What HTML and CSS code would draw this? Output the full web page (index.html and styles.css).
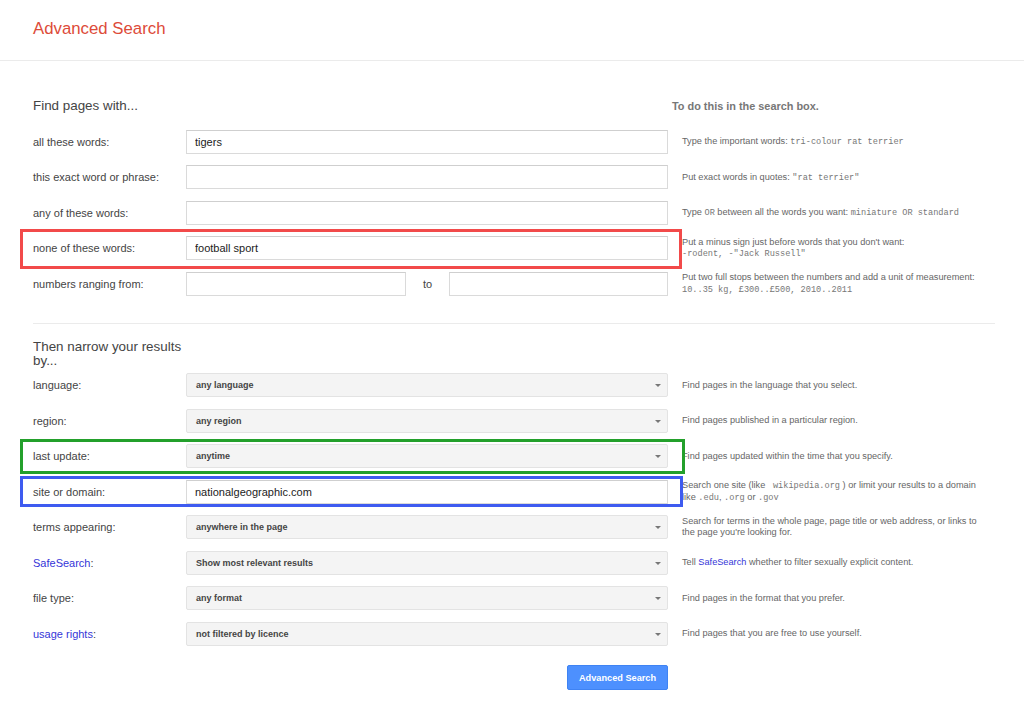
FILE: index.html
```html
<!DOCTYPE html>
<html lang="en">
<head>
  <meta charset="UTF-8" />
  <title>Advanced Search</title>
  <link rel="stylesheet" href="styles.css">
</head>
<body>
  <div class="page">
    <div class="header">
      <h1>Advanced Search</h1>
    </div>

    <div class="section first">
      <div class="row head-row">
        <h2>Find pages with...</h2>
        <div></div>
        <div class="todo">To do this in the search box.</div>
      </div>

      <div class="row">
        <label>all these words:</label>
        <input type="text" class="box" value="tigers">
        <div class="hint">Type the important words: <code>tri-colour rat terrier</code></div>
      </div>
      <div class="row">
        <label>this exact word or phrase:</label>
        <input type="text" class="box" value="">
        <div class="hint">Put exact words in quotes: <code>"rat terrier"</code></div>
      </div>
      <div class="row">
        <label>any of these words:</label>
        <input type="text" class="box" value="">
        <div class="hint">Type <code>OR</code> between all the words you want: <code>miniature OR standard</code></div>
      </div>
      <div class="row">
        <label>none of these words:</label>
        <input type="text" class="box" value="football sport">
        <div class="hint">Put a minus sign just before words that you don't want:<br><code>-rodent, -"Jack Russell"</code></div>
      </div>
      <div class="row">
        <label>numbers ranging from:</label>
        <div class="range">
          <input type="text" class="box" value="">
          <span class="to">to</span>
          <input type="text" class="box" value="">
        </div>
        <div class="hint">Put two full stops between the numbers and add a unit of measurement:<br><code>10..35 kg, £300..£500, 2010..2011</code></div>
      </div>
    </div>

    <hr class="divider">

    <div class="section">
      <div class="row head-row narrow">
        <h2>Then narrow your results by...</h2>
      </div>

      <div class="row">
        <label>language:</label>
        <div class="select">any language</div>
        <div class="hint">Find pages in the language that you select.</div>
      </div>
      <div class="row">
        <label>region:</label>
        <div class="select">any region</div>
        <div class="hint">Find pages published in a particular region.</div>
      </div>
      <div class="row">
        <label>last update:</label>
        <div class="select">anytime</div>
        <div class="hint">Find pages updated within the time that you specify.</div>
      </div>
      <div class="row">
        <label>site or domain:</label>
        <input type="text" class="box" value="nationalgeographic.com">
        <div class="hint">Search one site (like <code>&nbsp;wikipedia.org</code> ) or limit your results to a domain like <code>.edu</code>, <code>.org</code> or <code>.gov</code></div>
      </div>
      <div class="row">
        <label>terms appearing:</label>
        <div class="select">anywhere in the page</div>
        <div class="hint">Search for terms in the whole page, page title or web address, or links to the page you're looking for.</div>
      </div>
      <div class="row">
        <label><a href="#">SafeSearch</a>:</label>
        <div class="select">Show most relevant results</div>
        <div class="hint">Tell <a href="#">SafeSearch</a> whether to filter sexually explicit content.</div>
      </div>
      <div class="row">
        <label>file type:</label>
        <div class="select">any format</div>
        <div class="hint">Find pages in the format that you prefer.</div>
      </div>
      <div class="row">
        <label><a href="#">usage rights</a>:</label>
        <div class="select">not filtered by licence</div>
        <div class="hint">Find pages that you are free to use yourself.</div>
      </div>

      <div class="row submit-row">
        <div></div>
        <button type="button">Advanced Search</button>
      </div>
    </div>

    <!-- annotation boxes drawn over the form -->
    <div class="mark mark-red"></div>
    <div class="mark mark-green"></div>
    <div class="mark mark-blue"></div>
  </div>
</body>
</html>
```

FILE: styles.css
```css
body { margin: 0; background: #fff; font-family: Arial, "Liberation Sans", sans-serif; color: #444; }
.page { position: relative; width: 1024px; min-height: 712px; }

.header {
  height: 60px;
  border-bottom: 1px solid #ebebeb;
  padding-left: 33px;
  box-sizing: content-box;
}
.header h1 {
  margin: 0;
  padding-top: 19px;
  font-size: 16.8px;
  line-height: 20px;
  font-weight: normal;
  color: #dd4b39;
}

.section { padding-left: 33px; }
.section.first { padding-top: 37px; }

.row {
  display: grid;
  grid-template-columns: 139px 482px 300px;
  column-gap: 14px;
  align-items: center;
  height: 35.5px;
}
.row label { font-size: 11px; color: #444; white-space: nowrap; }
.row label a, .hint a { color: #3535d8; text-decoration: none; }

.head-row { height: auto; margin-bottom: 10px; }
.head-row h2 {
  margin: 0;
  font-size: 13.4px;
  line-height: 16px;
  font-weight: normal;
  color: #444;
}
.todo {
  margin-left: -10px;
  font-size: 10.9px;
  font-weight: bold;
  color: #777;
}
.narrow { margin-bottom: 0; }
.narrow h2 {
  grid-column: 1 / 3;
  width: 152px;
  line-height: 14px;
  padding-top: 1px;
}

.box {
  height: 24px;
  box-sizing: border-box;
  border: 1px solid #dadada;
  border-top-color: #cfcfcf;
  padding: 0 8px;
  font-family: Arial, "Liberation Sans", sans-serif;
  font-size: 11px;
  color: #222;
  width: 100%;
  outline: none;
}

.range {
  display: grid;
  grid-template-columns: 220px 1fr 219px;
  align-items: center;
}
.range .to { text-align: center; font-size: 11px; color: #444; }

.select {
  position: relative;
  height: 24px;
  box-sizing: border-box;
  border: 1px solid #e3e3e3;
  border-radius: 2px;
  background: #f4f4f4;
  padding: 0 9px;
  font-size: 9px;
  font-weight: bold;
  line-height: 22px;
  color: #444;
}
.select::after {
  content: "";
  position: absolute;
  right: 6px;
  top: 10px;
  border-left: 3.5px solid transparent;
  border-right: 3.5px solid transparent;
  border-top: 3.5px solid #777;
}

.hint {
  font-size: 9.2px;
  line-height: 11.5px;
  color: #666;
}
.hint code {
  font-family: "Liberation Mono", "DejaVu Sans Mono", monospace;
  font-size: 8.6px;
  line-height: 1;
  color: #777;
}

.divider {
  margin: 21px 29px 0 33px;
  border: 0;
  border-top: 1px solid #ebebeb;
  height: 0;
}
.divider + .section { padding-top: 15px; }

.submit-row { height: auto; margin-top: 13.5px; }
.submit-row button {
  justify-self: end;
  width: 101px;
  height: 25px;
  background: #4d90fe;
  border: 1px solid #3f83f3;
  border-radius: 2px;
  color: #fff;
  font-family: Arial, "Liberation Sans", sans-serif;
  font-size: 9.2px;
  font-weight: bold;
  padding: 0;
}

.mark { position: absolute; box-sizing: border-box; border: 3px solid; }
.mark-red { left: 20px; top: 229px; width: 662px; height: 40px; border-color: #f24a4a; }
.mark-green { left: 20px; top: 439px; width: 665px; height: 35px; border-color: #23a02b; }
.mark-blue { left: 20px; top: 476px; width: 663px; height: 31px; border-color: #3e5bf0; }
```
